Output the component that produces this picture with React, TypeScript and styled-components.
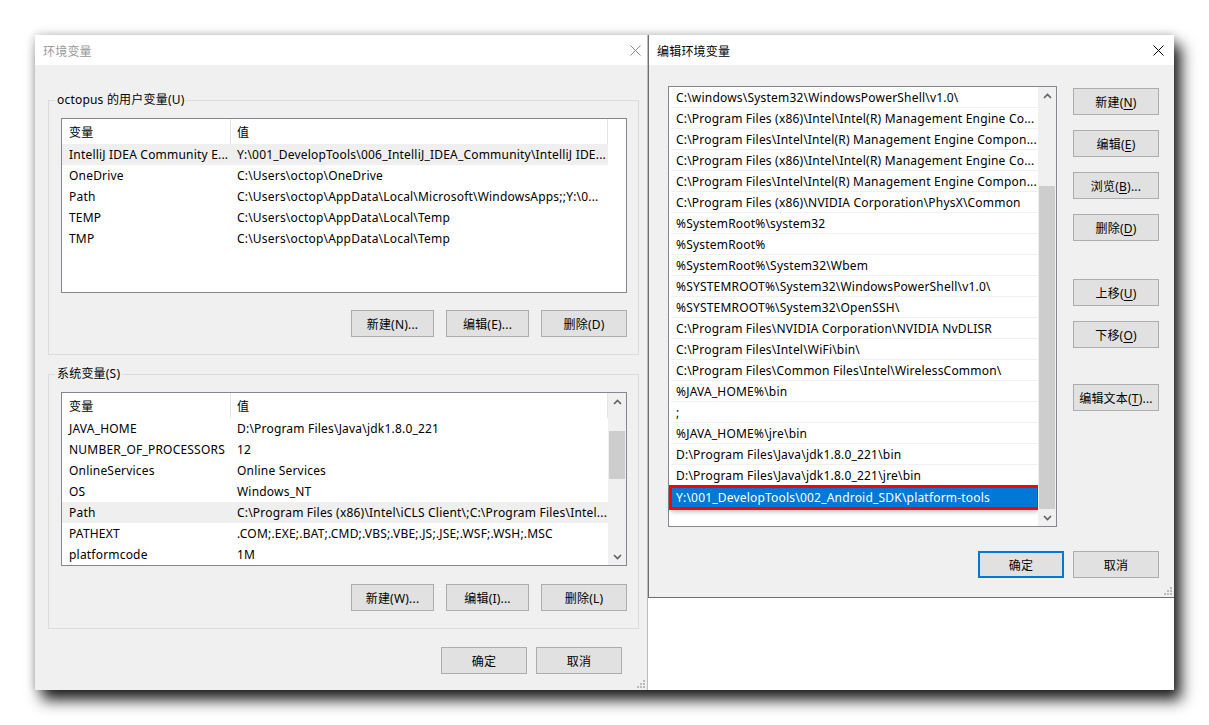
import React from "react";
import styled, { createGlobalStyle } from "styled-components";

//  Global
const GlobalStyle = createGlobalStyle`
  html, body {
    margin: 0;
    padding: 0;
    background: #ffffff;
  }
  body {
    font-family: "Noto Sans", "Noto Sans CJK SC", sans-serif;
    font-size: 12px;
    letter-spacing: 0.2px;
    color: #000000;
  }
`;

//  Styles
const Page = styled.div`
  width: 1209px;
  height: 725px;
  box-sizing: border-box;
  padding: 35px 0 0 35px;
`;

const Shot = styled.div`
  width: 1139px;
  height: 655px;
  display: flex;
  align-items: flex-start;
  background: #ffffff;
  box-shadow: 0 0 9px rgba(0, 0, 0, 0.22), 7px 10px 14px rgba(0, 0, 0, 0.88);
`;

const Dialog = styled.div<{ $w: number; $h: number; $active?: boolean }>`
  position: relative;
  width: ${(p) => p.$w}px;
  height: ${(p) => p.$h}px;
  box-sizing: border-box;
  display: flex;
  flex-direction: column;
  background: #f0f0f0;
  ${(p) =>
    p.$active
      ? "border-left: 1px solid #6f6f6f; border-bottom: 1px solid #6f6f6f;"
      : "border-right: 1px solid #bdbdbd;"}
`;

const TitleBar = styled.div<{ $active?: boolean; $pr: number }>`
  height: 30px;
  flex: none;
  display: flex;
  align-items: center;
  justify-content: space-between;
  padding: 0 ${(p) => p.$pr}px 0 8px;
  background: #ffffff;
  color: ${(p) => (p.$active ? "#000000" : "#999999")};
  font-family: "Noto Sans CJK SC", sans-serif;
  font-size: 12px;
`;

const LeftBody = styled.div`
  flex: 1;
  display: flex;
  flex-direction: column;
  padding: 27px 8px 0 13px;
`;

const Group = styled.fieldset<{ $mt?: number }>`
  margin: ${(p) => p.$mt ?? 0}px 0 0 0;
  padding: 10px 11px 17px 12px;
  border: 1px solid #dcdcdc;
  min-width: 0;
`;

const Legend = styled.legend`
  padding: 0 2px;
  margin-left: -6px;
  line-height: 16px;
  font-size: 12px;
`;

const ListBox = styled.div<{ $h: number }>`
  height: ${(p) => p.$h}px;
  box-sizing: border-box;
  border: 1px solid #828790;
  background: #ffffff;
  display: flex;
`;

const Table = styled.div`
  flex: 1;
  min-width: 0;
  display: flex;
  flex-direction: column;
`;

const Header = styled.div`
  height: 25px;
  display: flex;
  align-items: stretch;
`;

const HeadCell = styled.div<{ $w?: number }>`
  ${(p) => (p.$w ? `width: ${p.$w}px; flex: none;` : "flex: 1;")}
  box-sizing: border-box;
  display: flex;
  align-items: center;
  padding-left: ${(p) => (p.$w ? 7 : 6)}px;
  border-right: 1px solid #e5e5e5;
  white-space: nowrap;
`;

const Row = styled.div<{ $hl?: boolean }>`
  height: 21px;
  display: flex;
  align-items: center;
  background: ${(p) => (p.$hl ? "#efefef" : "transparent")};
`;

const Cell = styled.div<{ $w?: number }>`
  ${(p) => (p.$w ? `width: ${p.$w}px; flex: none;` : "flex: 1; min-width: 0;")}
  box-sizing: border-box;
  padding-left: ${(p) => (p.$w ? 7 : 6)}px;
  white-space: nowrap;
  overflow: hidden;
`;

const ScrollBar = styled.div<{ $blank?: boolean }>`
  width: 18px;
  flex: none;
  display: flex;
  flex-direction: column;
  background: ${(p) => (p.$blank ? "#ffffff" : "#f0f0f0")};
`;

const Arrow = styled.div`
  height: 17px;
  flex: none;
  display: flex;
  align-items: center;
  justify-content: center;
`;

const Track = styled.div`
  flex: 1;
  display: flex;
  flex-direction: column;
  padding: 0 1px;
`;

const Thumb = styled.div<{ $mt: number; $h?: number }>`
  margin-top: ${(p) => p.$mt}px;
  ${(p) => (p.$h ? `height: ${p.$h}px;` : "flex: 1;")}
  background: #cdcdcd;
`;

const ButtonRow = styled.div<{ $mt: number; $gap: number; $pr?: number }>`
  display: flex;
  justify-content: flex-end;
  gap: ${(p) => p.$gap}px;
  margin-top: ${(p) => p.$mt}px;
  padding-right: ${(p) => p.$pr ?? 0}px;
`;

const Button = styled.button<{ $w?: number; $mt?: number; $default?: boolean }>`
  width: ${(p) => p.$w ?? 86}px;
  height: 27px;
  flex: none;
  box-sizing: border-box;
  margin: ${(p) => p.$mt ?? 0}px 0 0 0;
  padding: 0;
  background: #e1e1e1;
  border: ${(p) => (p.$default ? "2px solid #0078d7" : "1px solid #adadad")};
  font-family: "Noto Sans", "Noto Sans CJK SC", sans-serif;
  font-size: 12px;
  letter-spacing: 0.2px;
  color: #000000;
  white-space: nowrap;
  u {
    text-decoration: underline;
    text-underline-offset: 2px;
  }
`;

const RightBody = styled.div`
  flex: 1;
  display: flex;
  flex-direction: column;
  padding: 21px 15px 0 19px;
`;

const RightMain = styled.div`
  display: flex;
  gap: 16px;
`;

const ButtonColumn = styled.div`
  display: flex;
  flex-direction: column;
  padding-top: 2px;
`;

const PathRows = styled.div`
  flex: 1;
  min-width: 0;
  display: flex;
  flex-direction: column;
  padding-left: 2px;
`;

const PathRow = styled.div<{ $sel?: boolean }>`
  height: 20px;
  flex: none;
  display: flex;
  align-items: center;
  padding-left: 5px;
  white-space: nowrap;
  overflow: hidden;
  border-bottom: 1px solid #f0f0f0;
  background: ${(p) => (p.$sel ? "#0078d7" : "#ffffff")};
  color: ${(p) => (p.$sel ? "#ffffff" : "#000000")};
  ${(p) =>
    p.$sel &&
    "margin-top: 1px; outline: 3px solid #ff0000; outline-offset: -1px; box-shadow: 0 3px 5px rgba(0,0,0,0.35);"}
`;

const Grip = styled.div`
  position: absolute;
  right: 2px;
  bottom: 2px;
  width: 8px;
  height: 8px;
  display: flex;
`;

//  Icons
const CloseIcon = ({ color }: { color: string }) => (
  <svg width="11" height="11" viewBox="0 0 11 11">
    <path d="M0.5 0.5 L10.5 10.5 M10.5 0.5 L0.5 10.5" stroke={color} strokeWidth="1" fill="none" />
  </svg>
);

const Chevron = ({ up }: { up?: boolean }) => (
  <svg width="9" height="6" viewBox="0 0 9 6">
    <path
      d={up ? "M1 5 L4.5 1.5 L8 5" : "M1 1 L4.5 4.5 L8 1"}
      stroke="#606060"
      strokeWidth="1.6"
      fill="none"
    />
  </svg>
);

const GripIcon = () => (
  <svg width="8" height="8" viewBox="0 0 8 8">
    <rect x="6" y="0" width="2" height="2" fill="#bcbcbc" />
    <rect x="3" y="3" width="2" height="2" fill="#bcbcbc" />
    <rect x="6" y="3" width="2" height="2" fill="#bcbcbc" />
    <rect x="0" y="6" width="2" height="2" fill="#bcbcbc" />
    <rect x="3" y="6" width="2" height="2" fill="#bcbcbc" />
    <rect x="6" y="6" width="2" height="2" fill="#bcbcbc" />
  </svg>
);

//  Data
const userVars: [string, string][] = [
  ["IntelliJ IDEA Community E...", "Y:\\001_DevelopTools\\006_IntelliJ_IDEA_Community\\IntelliJ IDE..."],
  ["OneDrive", "C:\\Users\\octop\\OneDrive"],
  ["Path", "C:\\Users\\octop\\AppData\\Local\\Microsoft\\WindowsApps;;Y:\\0..."],
  ["TEMP", "C:\\Users\\octop\\AppData\\Local\\Temp"],
  ["TMP", "C:\\Users\\octop\\AppData\\Local\\Temp"],
];

const systemVars: [string, string][] = [
  ["JAVA_HOME", "D:\\Program Files\\Java\\jdk1.8.0_221"],
  ["NUMBER_OF_PROCESSORS", "12"],
  ["OnlineServices", "Online Services"],
  ["OS", "Windows_NT"],
  ["Path", "C:\\Program Files (x86)\\Intel\\iCLS Client\\;C:\\Program Files\\Intel..."],
  ["PATHEXT", ".COM;.EXE;.BAT;.CMD;.VBS;.VBE;.JS;.JSE;.WSF;.WSH;.MSC"],
  ["platformcode", "1M"],
];

const paths = [
  "C:\\windows\\System32\\WindowsPowerShell\\v1.0\\",
  "C:\\Program Files (x86)\\Intel\\Intel(R) Management Engine Co...",
  "C:\\Program Files\\Intel\\Intel(R) Management Engine Compon...",
  "C:\\Program Files (x86)\\Intel\\Intel(R) Management Engine Co...",
  "C:\\Program Files\\Intel\\Intel(R) Management Engine Compon...",
  "C:\\Program Files (x86)\\NVIDIA Corporation\\PhysX\\Common",
  "%SystemRoot%\\system32",
  "%SystemRoot%",
  "%SystemRoot%\\System32\\Wbem",
  "%SYSTEMROOT%\\System32\\WindowsPowerShell\\v1.0\\",
  "%SYSTEMROOT%\\System32\\OpenSSH\\",
  "C:\\Program Files\\NVIDIA Corporation\\NVIDIA NvDLISR",
  "C:\\Program Files\\Intel\\WiFi\\bin\\",
  "C:\\Program Files\\Common Files\\Intel\\WirelessCommon\\",
  "%JAVA_HOME%\\bin",
  ";",
  "%JAVA_HOME%\\jre\\bin",
  "D:\\Program Files\\Java\\jdk1.8.0_221\\bin",
  "D:\\Program Files\\Java\\jdk1.8.0_221\\jre\\bin",
  "Y:\\001_DevelopTools\\002_Android_SDK\\platform-tools",
];

//  Parts
const VarList = ({
  rows,
  height,
  highlight,
  scroll,
}: {
  rows: [string, string][];
  height: number;
  highlight: number;
  scroll?: boolean;
}) => (
  <ListBox $h={height}>
    <Table>
      <Header>
        <HeadCell $w={169}>变量</HeadCell>
        <HeadCell>值</HeadCell>
      </Header>
      {rows.map(([k, v], i) => (
        <Row key={k + i} $hl={i === highlight}>
          <Cell $w={169}>{k}</Cell>
          <Cell>{v}</Cell>
        </Row>
      ))}
    </Table>
    {scroll ? (
      <ScrollBar>
        <Arrow>
          <Chevron up />
        </Arrow>
        <Track>
          <Thumb $mt={21} $h={48} />
        </Track>
        <Arrow>
          <Chevron />
        </Arrow>
      </ScrollBar>
    ) : (
      <ScrollBar $blank />
    )}
  </ListBox>
);

const EnvDialog = () => (
  <Dialog $w={613} $h={655}>
    <TitleBar $pr={6}>
      <span>环境变量</span>
      <CloseIcon color="#8a8a8a" />
    </TitleBar>
    <LeftBody>
      <Group>
        <Legend>octopus 的用户变量(U)</Legend>
        <VarList rows={userVars} height={175} highlight={0} />
        <ButtonRow $mt={17} $gap={12}>
          <Button $w={83}>新建(N)...</Button>
          <Button $w={83}>编辑(E)...</Button>
          <Button>删除(D)</Button>
        </ButtonRow>
      </Group>
      <Group $mt={11}>
        <Legend>系统变量(S)</Legend>
        <VarList rows={systemVars} height={174} highlight={4} scroll />
        <ButtonRow $mt={18} $gap={12}>
          <Button $w={83}>新建(W)...</Button>
          <Button $w={83}>编辑(I)...</Button>
          <Button>删除(L)</Button>
        </ButtonRow>
      </Group>
      <ButtonRow $mt={18} $gap={9} $pr={17}>
        <Button>确定</Button>
        <Button>取消</Button>
      </ButtonRow>
    </LeftBody>
    <Grip>
      <GripIcon />
    </Grip>
  </Dialog>
);

const EditDialog = () => (
  <Dialog $w={526} $h={563} $active>
    <TitleBar $pr={10} $active>
      <span>编辑环境变量</span>
      <CloseIcon color="#000000" />
    </TitleBar>
    <RightBody>
      <RightMain>
        <ListBox $h={441} style={{ width: 390 }}>
          <PathRows>
            {paths.map((p, i) => (
              <PathRow key={i} $sel={i === paths.length - 1}>
                {p}
              </PathRow>
            ))}
          </PathRows>
          <ScrollBar>
            <Arrow>
              <Chevron up />
            </Arrow>
            <Track>
              <Thumb $mt={82} />
            </Track>
            <Arrow>
              <Chevron />
            </Arrow>
          </ScrollBar>
        </ListBox>
        <ButtonColumn>
          <Button>
            新建(<u>N</u>)
          </Button>
          <Button $mt={15}>
            编辑(<u>E</u>)
          </Button>
          <Button $mt={15}>
            浏览(<u>B</u>)...
          </Button>
          <Button $mt={15}>
            删除(<u>D</u>)
          </Button>
          <Button $mt={38}>
            上移(<u>U</u>)
          </Button>
          <Button $mt={15}>
            下移(<u>O</u>)
          </Button>
          <Button $mt={36}>
            编辑文本(<u>T</u>)...
          </Button>
        </ButtonColumn>
      </RightMain>
      <ButtonRow $mt={24} $gap={9}>
        <Button $default>确定</Button>
        <Button>取消</Button>
      </ButtonRow>
    </RightBody>
    <Grip>
      <GripIcon />
    </Grip>
  </Dialog>
);

//  App
const App = () => (
  <>
    <GlobalStyle />
    <Page>
      <Shot>
        <EnvDialog />
        <EditDialog />
      </Shot>
    </Page>
  </>
);

export default App;
